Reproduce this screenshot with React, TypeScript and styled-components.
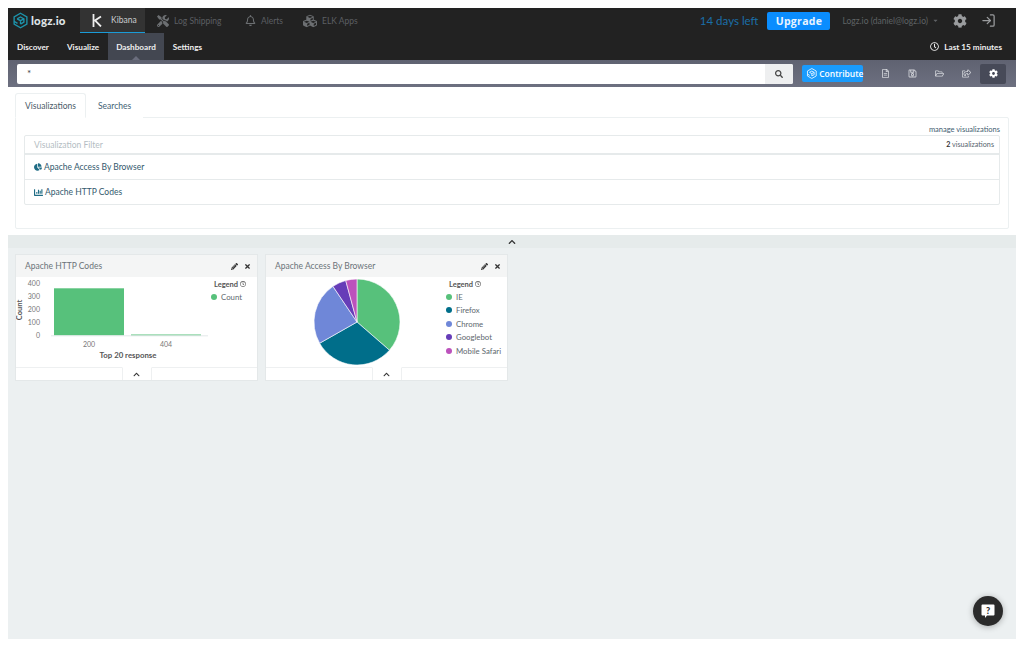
import React from 'react';
import styled, { createGlobalStyle } from 'styled-components';
import { FaBell, FaRegBell, FaChartBar, FaChartPie, FaCog, FaCubes, FaPencilAlt, FaRegClock, FaRegFolderOpen, FaRegSave, FaRegShareSquare, FaSearch, FaTimes, FaTools, FaChevronUp, FaRegFileAlt, FaCaretDown } from 'react-icons/fa';
import { FiLogIn } from 'react-icons/fi';

const GlobalStyle = createGlobalStyle`
  html, body { margin: 0; padding: 0; background: #fff; }
  body { font-family: Lato, "Open Sans", "Liberation Sans", sans-serif; }
`;

const Frame = styled.div`
  margin: 8px 8px 0;
  width: 1008px;
  height: 631px;
  display: flex;
  flex-direction: column;
  background: #ecf0f1;
  position: relative;
  overflow: hidden;
`;

const TopBar = styled.div`
  height: 25px;
  background: #222;
  display: flex;
  align-items: center;
  padding: 0 20px 0 4px;
`;

const Brand = styled.div`
  display: flex;
  align-items: center;
  gap: 2px;
  width: 68px;
  color: #dfe3e6;
  font-size: 11.5px;
  font-weight: 900;
  letter-spacing: 0.2px;
`;

const ProductTab = styled.div<{ $active?: boolean; $width: number; $gap?: number }>`
  width: ${p => p.$width}px;
  height: 25px;
  box-sizing: border-box;
  display: flex;
  align-items: center;
  gap: ${p => p.$gap ?? 5}px;
  padding-left: ${p => (p.$active ? 12 : 0)}px;
  font-size: 8.5px;
  color: ${p => (p.$active ? '#c9ccd0' : '#5c5f62')};
  background: ${p => (p.$active ? '#333' : 'transparent')};
  border-bottom: ${p => (p.$active ? '1px solid #1a9bd7' : 'none')};
  margin-right: ${p => (p.$active ? 12 : 0)}px;
  svg { color: ${p => (p.$active ? '#e8e8e8' : '#6c6f72')}; flex: none; }
`;

const Spacer = styled.div`
  flex: 1;
`;

const DaysLeft = styled.span`
  color: #1a6ea8;
  font-size: 11.5px;
  margin-right: 9px;
`;

const UpgradeButton = styled.button`
  width: 63px;
  height: 18px;
  border: 0;
  border-radius: 2px;
  background: #0a8dff;
  color: #e8f4ff;
  font: 700 10.5px "Open Sans", sans-serif;
  letter-spacing: 0.3px;
  padding: 0;
  margin-right: 12px;
`;

const UserMenu = styled.div`
  display: flex;
  align-items: center;
  gap: 4px;
  color: #5f6265;
  font-size: 8.5px;
  margin-right: 14px;
`;

const TopIcon = styled.span<{ $gap: number }>`
  display: flex;
  color: #9a9c9e;
  margin-right: ${p => p.$gap}px;
`;

const NavBar = styled.div`
  height: 27px;
  background: #222;
  display: flex;
  align-items: stretch;
  padding: 0 14px 0 0;
`;

const NavItem = styled.div<{ $active?: boolean }>`
  position: relative;
  display: flex;
  align-items: center;
  padding: 0 ${p => (p.$active ? 8 : 9)}px;
  font-size: 8.2px;
  font-weight: 700;
  color: #f0f0f0;
  background: ${p => (p.$active ? '#434751' : 'transparent')};
  ${p => p.$active && `
    &::after {
      content: '';
      position: absolute;
      left: 50%;
      bottom: 0;
      margin-left: -4px;
      border: 4px solid transparent;
      border-top: 0;
      border-bottom-color: #6a6d7c;
    }
  `}
`;

const TimePicker = styled.div`
  margin-left: auto;
  display: flex;
  align-items: center;
  gap: 5px;
  font-size: 8.2px;
  font-weight: 700;
  color: #efefef;
`;

const Toolbar = styled.div`
  height: 27px;
  box-sizing: border-box;
  background: linear-gradient(#5f6271, #6d7080);
  display: flex;
  align-items: center;
  padding: 0 10px 0 9px;
`;

const SearchBox = styled.div`
  width: 785px;
  height: 20px;
  display: flex;
  background: #fff;
  border-radius: 2px;
  margin-right: 9px;
`;

const SearchInput = styled.div`
  flex: 1;
  padding: 3px 0 0 10px;
  font-size: 10px;
  color: #444;
`;

const SearchButton = styled.div`
  width: 28px;
  display: flex;
  align-items: center;
  justify-content: center;
  background: #eeeff0;
  border-radius: 0 2px 2px 0;
  color: #444;
`;

const ContributeButton = styled.div`
  width: 61px;
  height: 17px;
  box-sizing: border-box;
  border-radius: 2px;
  background: #1a9bfc;
  color: #fff;
  display: flex;
  align-items: center;
  gap: 1px;
  padding-left: 4px;
  font: 600 8.5px "Open Sans", sans-serif;
  margin-right: 8px;
`;

const ToolIcon = styled.div<{ $active?: boolean }>`
  width: ${p => (p.$active ? 26 : 27.5)}px;
  height: 20px;
  display: flex;
  align-items: center;
  justify-content: center;
  color: ${p => (p.$active ? '#fff' : '#d0d2d8')};
  background: ${p => (p.$active ? '#474a58' : 'transparent')};
  border-radius: 2px;
`;

const TopPanel = styled.div`
  height: 148px;
  box-sizing: border-box;
  background: #fff;
  padding: 6px 7px 6px 7px;
`;

const TabRow = styled.div`
  display: flex;
  height: 24px;
  position: relative;
  z-index: 1;
`;

const PanelTab = styled.div<{ $active?: boolean }>`
  width: ${p => (p.$active ? 67 : 'auto')};
  box-sizing: border-box;
  padding: 0 ${p => (p.$active ? 9 : 11)}px;
  display: flex;
  align-items: center;
  font-size: 8.5px;
  color: ${p => (p.$active ? '#4a5a68' : '#3f6275')};
  background: #fff;
  border: 1px solid ${p => (p.$active ? '#ecf0f1' : 'transparent')};
  border-bottom: ${p => (p.$active ? '1px solid #fff' : 0)};
  border-radius: 3px 3px 0 0;
  height: 25px;
`;

const TabBody = styled.div`
  height: 112px;
  box-sizing: border-box;
  border: 1px solid #ecf0f1;
  border-radius: 0 2px 2px 2px;
  padding: 7px 8px 0;
`;

const ManageLink = styled.div`
  text-align: right;
  font-size: 7.5px;
  line-height: 10px;
  color: #3f5d70;
`;

const VisList = styled.div`
  border: 1px solid #e6eaeb;
  border-radius: 2px;
`;

const FilterRow = styled.div`
  height: 17px;
  display: flex;
  align-items: center;
  justify-content: space-between;
  padding: 0 5px 0 9px;
  border-bottom: 2px solid #e6eaeb;
  font-size: 8.5px;
  color: #b4bdc3;
`;

const VisCount = styled.span`
  font-size: 7.2px;
  color: #56646e;
  b { color: #333; }
`;

const VisRow = styled.div`
  height: 24px;
  display: flex;
  align-items: center;
  gap: 2px;
  padding-left: 9px;
  font-size: 8.5px;
  color: #33596d;
  & + & { border-top: 1px solid #e6eaeb; }
  svg { color: #1f6c85; }
`;

const CollapseBar = styled.div`
  height: 13px;
  background: #e6ebeb;
  display: flex;
  align-items: center;
  justify-content: center;
  color: #333;
`;

const Dashboard = styled.div`
  flex: 1;
  display: flex;
  align-items: flex-start;
  gap: 7px;
  padding: 6px 7px;
`;

const Card = styled.div`
  width: 243px;
  height: 127px;
  box-sizing: border-box;
  display: flex;
  flex-direction: column;
  background: #fff;
  border: 1px solid #e4e8e9;
`;

const CardHeader = styled.div`
  height: 22px;
  flex: none;
  display: flex;
  align-items: center;
  justify-content: space-between;
  padding: 0 6px 0 9px;
  background: #f4f5f5;
  font-size: 8.5px;
  color: #6b7378;
`;

const CardActions = styled.div`
  display: flex;
  align-items: center;
  gap: 6px;
  color: #333;
`;

const CardBody = styled.div`
  flex: 1;
  position: relative;
  display: flex;
`;

const Legend = styled.div<{ $width: number }>`
  width: ${p => p.$width}px;
  flex: none;
  padding-top: 1px;
`;

const LegendTitle = styled.div`
  display: flex;
  align-items: center;
  gap: 2px;
  padding-left: 3px;
  height: 12px;
  font-size: 7.5px;
  font-weight: 700;
  color: #555;
`;

const LegendItem = styled.div`
  display: flex;
  align-items: center;
  gap: 4px;
  height: 13.5px;
  font-size: 7.8px;
  color: #5e686e;
  white-space: nowrap;
`;

const Dot = styled.i<{ $color: string }>`
  width: 6px;
  height: 6px;
  border-radius: 50%;
  background: ${p => p.$color};
`;

const CardFooter = styled.div`
  height: 13px;
  flex: none;
  box-sizing: border-box;
  border-top: 1px solid #eef0f1;
  display: flex;
  justify-content: center;
`;

const FooterTab = styled.div`
  width: 30px;
  height: 13px;
  margin-top: -1px;
  box-sizing: border-box;
  border: 1px solid #eef0f1;
  border-top-color: #fff;
  border-bottom: 0;
  display: flex;
  align-items: center;
  justify-content: center;
  color: #333;
`;

const HelpButton = styled.div`
  position: absolute;
  left: 965px;
  top: 588px;
  width: 30px;
  height: 30px;
  border-radius: 50%;
  background: #2b2b2b;
  box-shadow: 0 1px 6px rgba(0, 0, 0, 0.3);
  display: flex;
  align-items: center;
  justify-content: center;
`;

const tools = [FaRegFileAlt, FaRegSave, FaRegFolderOpen, FaRegShareSquare];
const browsers = [
  { name: 'IE', color: '#57c17b', end: 131 },
  { name: 'Firefox', color: '#006e8a', end: 240.4 },
  { name: 'Chrome', color: '#6f87d8', end: 326 },
  { name: 'Googlebot', color: '#663db8', end: 344.8 },
  { name: 'Mobile Safari', color: '#bc52bc', end: 360 },
];

function LogoMark({ size, color }: { size: number; color: string }) {
  return (
    <svg width={size} height={size} viewBox="0 0 20 20" fill="none" stroke={color} strokeWidth="1.6">
      <path d="M10 1.5l7.5 4.2v8.6L10 18.5l-7.5-4.2V5.7z" />
      <path d="M6 8l4-2.2L14 8v4l-4 2.2M6 8l4 2.2L14 8M10 10.2v4M2.5 11l4 2.3" />
    </svg>
  );
}

function KibanaMark() {
  return (
    <svg width="10" height="13" viewBox="0 0 10 13" fill="none" stroke="#eee" strokeWidth="1.8">
      <path d="M1.5 0v13M9 2.5L3 6.5l6 6" />
    </svg>
  );
}

function BarChart() {
  const ticks = [400, 300, 200, 100, 0];
  return (
    <svg width="195" height="90" viewBox="0 0 195 90" fontFamily="Lato, sans-serif">
      <text transform="translate(6 33) rotate(-90)" textAnchor="middle" fontSize="7.5" fontWeight="700" fill="#555">Count</text>
      {ticks.map((t, i) => (
        <text key={t} x="24" y={8.5 + i * 13.2} textAnchor="end" fontSize="7" fill="#777">{t}</text>
      ))}
      <rect x="38" y="11.3" width="70" height="47" fill="#57c17b" />
      <rect x="115" y="57.5" width="70" height="1" fill="#57c17b" />
      <line x1="35" y1="58.8" x2="192" y2="58.8" stroke="#dde2e3" strokeWidth="0.8" />
      <text x="73" y="70" textAnchor="middle" fontSize="7" fill="#777">200</text>
      <text x="150" y="70" textAnchor="middle" fontSize="7" fill="#777">404</text>
      <text x="112" y="81" textAnchor="middle" fontSize="7.8" fontWeight="700" fill="#555">Top 20 response</text>
    </svg>
  );
}

function point(deg: number, r: number) {
  const a = (deg * Math.PI) / 180;
  return `${(r * Math.sin(a)).toFixed(2)} ${(-r * Math.cos(a)).toFixed(2)}`;
}

function PieChart() {
  let start = 0;
  return (
    <svg width="180" height="90" viewBox="-91 -45 180 90">
      {browsers.map(b => {
        const path = `M0 0L${point(start, 43)}A43 43 0 ${b.end - start > 180 ? 1 : 0} 1 ${point(b.end, 43)}Z`;
        start = b.end;
        return <path key={b.name} d={path} fill={b.color} stroke="#fff" strokeWidth="0.6" />;
      })}
    </svg>
  );
}

function HelpIcon() {
  return (
    <svg width="16" height="16" viewBox="0 0 16 16">
      <path d="M2.5 1.5h11a1 1 0 0 1 1 1v9a1 1 0 0 1-1 1H7l-2 2.5v-2.5H2.500a1 1 0 0 1-1-1v-9a1 1 0 0 1 1-1z" fill="#fff" />
      <text x="8" y="10.500" textAnchor="middle" fontSize="9" fontWeight="900" fill="#2b2b2b" fontFamily="Lato, sans-serif">?</text>
    </svg>
  );
}

export default function App() {
  return (
    <>
      <GlobalStyle />
      <Frame>
        <TopBar>
          <Brand>
            <LogoMark size={17} color="#1d93ab" />
            <span>logz.io</span>
          </Brand>
          <ProductTab $active $width={65} $gap={9}><KibanaMark />Kibana</ProductTab>
          <ProductTab $width={88}><FaTools size={12} />Log Shipping</ProductTab>
          <ProductTab $width={58}><FaRegBell size={11} />Alerts</ProductTab>
          <ProductTab $width={80}><FaCubes size={14} />ELK Apps</ProductTab>
          <Spacer />
          <DaysLeft>14 days left</DaysLeft>
          <UpgradeButton>Upgrade</UpgradeButton>
          <UserMenu>Logz.io (daniel@logz.io)<FaCaretDown size={7} /></UserMenu>
          <TopIcon $gap={14}><FaCog size={14} /></TopIcon>
          <TopIcon $gap={0}><FiLogIn size={15} /></TopIcon>
        </TopBar>
        <NavBar>
          <NavItem>Discover</NavItem>
          <NavItem>Visualize</NavItem>
          <NavItem $active>Dashboard</NavItem>
          <NavItem>Settings</NavItem>
          <TimePicker><FaRegClock size={9} />Last 15 minutes</TimePicker>
        </NavBar>
        <Toolbar>
          <SearchBox>
            <SearchInput>*</SearchInput>
            <SearchButton><FaSearch size={8} /></SearchButton>
          </SearchBox>
          <ContributeButton><LogoMark size={13} color="#dff1ff" />Contribute</ContributeButton>
          {tools.map((Icon, i) => (
            <ToolIcon key={i}><Icon size={9} /></ToolIcon>
          ))}
          <ToolIcon $active><FaCog size={9} /></ToolIcon>
        </Toolbar>
        <TopPanel>
          <TabRow>
            <PanelTab $active>Visualizations</PanelTab>
            <PanelTab>Searches</PanelTab>
          </TabRow>
          <TabBody>
            <ManageLink>manage visualizations</ManageLink>
            <VisList>
              <FilterRow>
                <span>Visualization Filter</span>
                <VisCount><b>2</b> visualizations</VisCount>
              </FilterRow>
              <VisRow><FaChartPie size={8} />Apache Access By Browser</VisRow>
              <VisRow><FaChartBar size={9} />Apache HTTP Codes</VisRow>
            </VisList>
          </TabBody>
        </TopPanel>
        <CollapseBar><FaChevronUp size={8} /></CollapseBar>
        <Dashboard>
          <Card>
            <CardHeader>
              Apache HTTP Codes
              <CardActions><FaPencilAlt size={7} /><FaTimes size={7} /></CardActions>
            </CardHeader>
            <CardBody>
              <BarChart />
              <Legend $width={46}>
                <LegendTitle>Legend <FaRegClock size={6} /></LegendTitle>
                <LegendItem><Dot $color="#57c17b" />Count</LegendItem>
              </Legend>
            </CardBody>
            <CardFooter><FooterTab><FaChevronUp size={7} /></FooterTab></CardFooter>
          </Card>
          <Card>
            <CardHeader>
              Apache Access By Browser
              <CardActions><FaPencilAlt size={7} /><FaTimes size={7} /></CardActions>
            </CardHeader>
            <CardBody>
              <PieChart />
              <Legend $width={60}>
                <LegendTitle>Legend <FaRegClock size={6} /></LegendTitle>
                {browsers.map(b => (
                  <LegendItem key={b.name}><Dot $color={b.color} />{b.name}</LegendItem>
                ))}
              </Legend>
            </CardBody>
            <CardFooter><FooterTab><FaChevronUp size={7} /></FooterTab></CardFooter>
          </Card>
        </Dashboard>
        <HelpButton><HelpIcon /></HelpButton>
      </Frame>
    </>
  );
}
